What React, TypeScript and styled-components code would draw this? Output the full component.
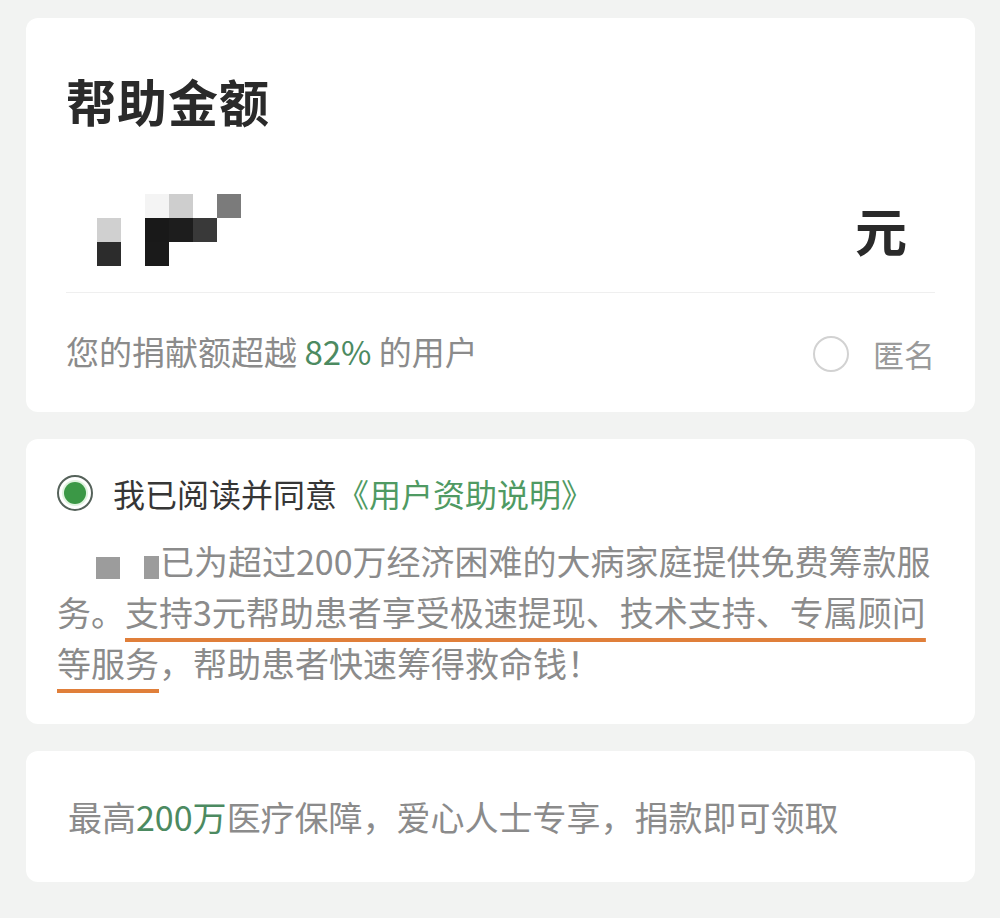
import styled, { createGlobalStyle } from "styled-components";

const GlobalStyle = createGlobalStyle`
  html, body {
    margin: 0;
    padding: 0;
    background: #f2f3f2;
  }
  body {
    font-family: "Noto Sans CJK SC", "Noto Sans", sans-serif;
    -webkit-font-smoothing: antialiased;
  }
`;

const colors = {
  page: "#f2f3f2",
  card: "#ffffff",
  title: "#2a2a2a",
  body: "#363636",
  muted: "#8b8b8b",
  green: "#4c8a61",
  link: "#4f9a63",
  radioOn: "#3b9846",
  radioRing: "#55625a",
  radioOff: "#d2d2d2",
  divider: "#efefef",
  marker: "#e07f3a",
};

const Page = styled.main`
  display: flex;
  flex-direction: column;
  gap: 27px;
  padding: 18px 25px 35px 26px;
`;

const Card = styled.section`
  background: ${colors.card};
  border-radius: 12px;
`;

/* ---------- amount card ---------- */

const AmountCard = styled(Card)`
  display: flex;
  flex-direction: column;
  padding: 52px 40px 41px 40px;
`;

const Title = styled.h1`
  margin: 0;
  font-size: 50px;
  line-height: 60px;
  font-weight: 700;
  color: ${colors.title};
  letter-spacing: 1px;
`;

const AmountRow = styled.div`
  display: flex;
  align-items: center;
  justify-content: space-between;
  height: 80px;
  margin-top: 60px;
  padding: 0 28px 0 31px;
`;

const Mosaic = styled.div`
  display: grid;
  grid-template-columns: repeat(6, 24px);
  grid-auto-rows: 24px;
`;

const Tile = styled.span<{ $shade: string }>`
  background: ${({ $shade }) => $shade};
`;

const Unit = styled.span`
  font-size: 52px;
  line-height: 60px;
  font-weight: 700;
  color: ${colors.title};
`;

const Divider = styled.hr`
  margin: 22px 0 0;
  border: 0;
  height: 1px;
  background: ${colors.divider};
`;

const StatRow = styled.div`
  display: flex;
  align-items: center;
  justify-content: space-between;
  height: 40px;
  margin-top: 38px;
`;

const StatText = styled.p`
  margin: 0;
  font-size: 33px;
  line-height: 40px;
  color: ${colors.muted};
`;

const Highlight = styled.span`
  color: ${colors.green};
`;

const Anonymous = styled.label`
  display: flex;
  align-items: center;
  gap: 24px;
  font-size: 31px;
  line-height: 40px;
  color: #9a9a9a;
  margin-top: 6px;
`;

const Radio = styled.span<{ $checked?: boolean }>`
  position: relative;
  flex: none;
  box-sizing: border-box;
  width: 36px;
  height: 36px;
  border-radius: 50%;
  border: 2px solid ${({ $checked }) => ($checked ? colors.radioRing : colors.radioOff)};
  background: #fff;

  &::after {
    content: "";
    display: ${({ $checked }) => ($checked ? "block" : "none")};
    position: absolute;
    inset: 5px;
    border-radius: 50%;
    background: ${colors.radioOn};
    box-shadow: 0 0 0 2px #dff3df;
  }
`;

/* ---------- agreement card ---------- */

const AgreementCard = styled(Card)`
  padding: 32px 30px 36px 31px;
`;

const AgreeRow = styled.div`
  display: flex;
  align-items: center;
  gap: 20px;
  height: 44px;
  font-size: 32px;
  line-height: 44px;
  color: ${colors.body};
`;

const DocLink = styled.span`
  color: ${colors.link};
`;

const Notice = styled.p`
  margin: 20px 0 0;
  font-size: 34px;
  line-height: 51px;
  color: ${colors.muted};
`;

const Redacted = styled.span`
  display: inline-flex;
  align-items: flex-end;
  gap: 24px;
  width: 103px;
  height: 30px;
  padding-left: 39px;
  box-sizing: border-box;
  vertical-align: -4px;
`;

const RedactedBlock = styled.span<{ $w: number; $h: number }>`
  width: ${({ $w }) => $w}px;
  height: ${({ $h }) => $h}px;
  background: #9c9c9c;
`;

const Marked = styled.span`
  text-decoration: underline;
  text-decoration-color: ${colors.marker};
  text-decoration-thickness: 4px;
  text-underline-offset: 12px;
  text-decoration-skip-ink: none;
`;

/* ---------- benefit card ---------- */

const BenefitCard = styled(Card)`
  display: flex;
  align-items: center;
  height: 131px;
  padding: 0 42px;
  font-size: 34px;
  color: ${colors.muted};
`;

const mosaicTiles = [
  "transparent", "transparent", "#f4f4f4", "#cecece", "transparent", "#7b7b7b",
  "#d0d0d0", "transparent", "#191919", "#1d1d1d", "#393939", "transparent",
  "#2c2c2c", "transparent", "#1a1a1a", "transparent", "transparent", "transparent",
];

export default function App() {
  return (
    <>
      <GlobalStyle />
      <Page>
        <AmountCard>
          <Title>帮助金额</Title>
          <AmountRow>
            <Mosaic aria-hidden="true">
              {mosaicTiles.map((shade, i) => (
                <Tile key={i} $shade={shade} />
              ))}
            </Mosaic>
            <Unit>元</Unit>
          </AmountRow>
          <Divider />
          <StatRow>
            <StatText>
              您的捐献额超越 <Highlight>82%</Highlight> 的用户
            </StatText>
            <Anonymous>
              <Radio />
              匿名
            </Anonymous>
          </StatRow>
        </AmountCard>

        <AgreementCard>
          <AgreeRow>
            <Radio $checked />
            <span>
              我已阅读并同意<DocLink>《用户资助说明》</DocLink>
            </span>
          </AgreeRow>
          <Notice>
            <Redacted aria-hidden="true">
              <RedactedBlock $w={24} $h={22} />
              <RedactedBlock $w={15} $h={23} />
            </Redacted>
            已为超过200万经济困难的大病家庭提供免费筹款服务。
            <Marked>支持3元帮助患者享受极速提现、技术支持、专属顾问等服务</Marked>
            ，帮助患者快速筹得救命钱！
          </Notice>
        </AgreementCard>

        <BenefitCard>
          最高<Highlight>200万</Highlight>医疗保障，爱心人士专享，捐款即可领取
        </BenefitCard>
      </Page>
    </>
  );
}
